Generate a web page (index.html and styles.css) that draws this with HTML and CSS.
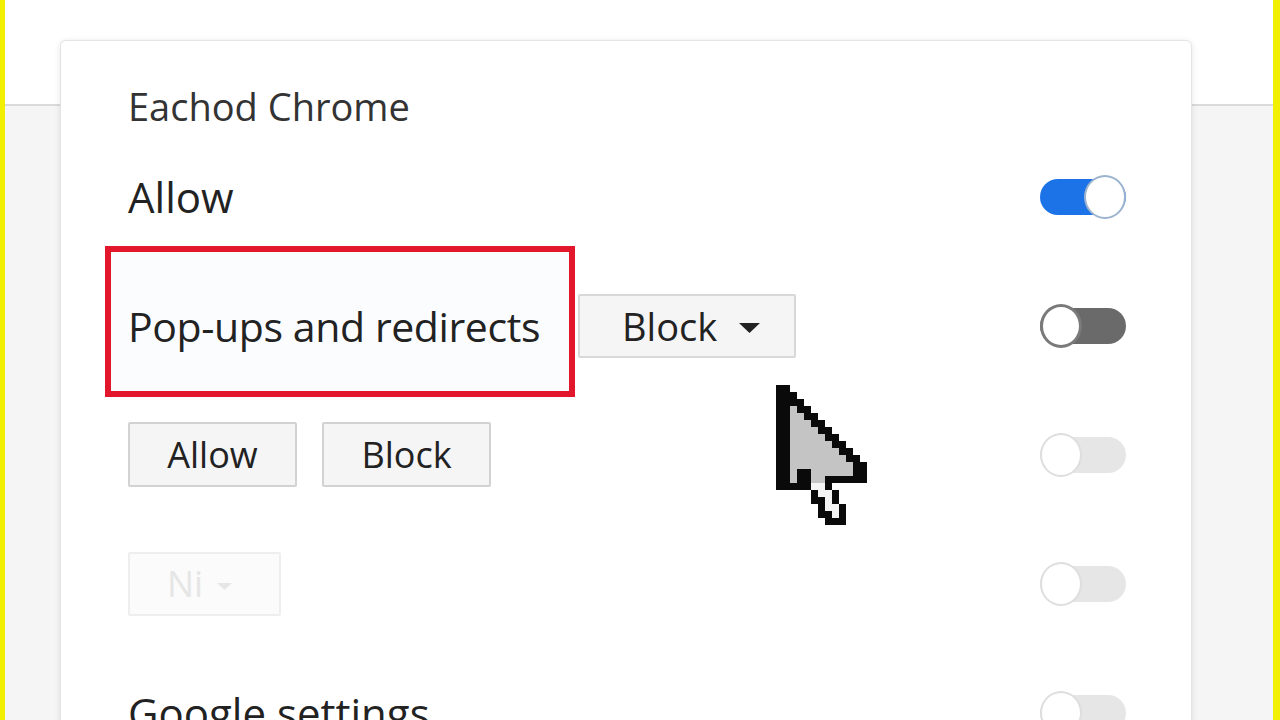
FILE: index.html
```html
<!DOCTYPE html>
<html>
<head>
<meta charset="utf-8">
<link rel="stylesheet" href="styles.css">
</head>
<body>
<div class="page">
  <div class="card">
    <div class="header">Eachod Chrome</div>

    <div class="row">
      <span class="label">Allow</span>
      <span class="toggle on"><span class="knob"></span></span>
    </div>

    <div class="row">
      <div class="left">
        <span class="label hl">Pop-ups and redirects</span>
        <span class="select">Block
          <svg class="caret" viewBox="0 0 21 10" width="21" height="10"><path d="M0 0H21L10.5 10Z" fill="#222"/></svg>
        </span>
      </div>
      <span class="toggle dark"><span class="knob"></span></span>
    </div>

    <div class="row">
      <div class="left btns">
        <span class="btn">Allow</span>
        <span class="btn">Block</span>
      </div>
      <span class="toggle light"><span class="knob"></span></span>
    </div>

    <div class="row">
      <span class="btn disabled">Ni
        <svg class="caret small" viewBox="0 0 15 7" width="15" height="7"><path d="M0 0H15L7.5 7Z" fill="#e6e6e6"/></svg>
      </span>
      <span class="toggle light"><span class="knob"></span></span>
    </div>

    <div class="row">
      <span class="label">Google settings</span>
      <span class="toggle light"><span class="knob"></span></span>
    </div>
  </div>

  <svg class="cursor" viewBox="0 0 13 20" width="91" height="140" shape-rendering="crispEdges">
    <path fill="#c4c4c4" d="M2 3h1v1h-1zM2 4h2v1h-2zM2 5h3v1h-3zM2 6h4v1h-4zM2 7h5v1h-5zM2 8h6v1h-6zM2 9h7v1h-7zM2 10h8v1h-8zM2 11h9v1h-9zM2 12h1v1h-1zM5 12h6v1h-6zM2 13h1v1h-1zM5 13h2v1h-2z"/>
    <path fill="#f4f4f4" d="M5 14h2v1h-2zM6 15h2v1h-2zM7 16h1v1h-1zM7 17h2v1h-2zM8 18h1v1h-1z"/>
    <path fill="#0a0a0a" d="M0 0h2v15h-2zM2 1h1v1h-1zM2 2h2v1h-2zM3 3h2v1h-2zM4 4h2v1h-2zM5 5h2v1h-2zM6 6h2v1h-2zM7 7h2v1h-2zM8 8h2v1h-2zM9 9h2v1h-2zM10 10h2v1h-2zM11 11h2v1h-2zM3 12h2v1h-2zM11 12h2v1h-2zM3 13h2v1h-2zM7 13h6v1h-6zM2 14h3v1h-3zM7 14h1v1h-1zM5 15h1v1h-1zM8 15h1v1h-1zM5 16h2v1h-2zM8 16h1v1h-1zM6 17h1v1h-1zM9 17h1v1h-1zM6 18h2v1h-2zM9 18h1v1h-1zM7 19h3v1h-3z"/>
  </svg>
</div>
</body>
</html>
```

FILE: styles.css
```css
html, body {
  margin: 0;
  padding: 0;
}

body {
  width: 1280px;
  height: 720px;
  overflow: hidden;
  font-family: "Open Sans", "Noto Sans", sans-serif;
  color: #242424;
}

.page {
  position: relative;
  box-sizing: border-box;
  height: 720px;
  overflow: hidden;
  border-left: 5px solid #f0f000;
  border-right: 7px solid #f0f000;
  padding-top: 40px;
  background: linear-gradient(#ffffff 0 104px, #dadada 104px 106px, #f5f5f5 106px);
}

.card {
  position: relative;
  z-index: 0;
  box-sizing: border-box;
  margin-left: 55px;
  width: 1132px;
  height: 780px;
  padding: 0 65px 0 67px;
  background: #ffffff;
  border: 1px solid #e4e4e4;
  border-radius: 6px;
  box-shadow: 0 1px 6px rgba(0, 0, 0, 0.10);
}

.header {
  box-sizing: border-box;
  height: 91px;
  padding-top: 46px;
  font-size: 38px;
  line-height: 38px;
  color: #333333;
}

.row {
  height: 129px;
  display: flex;
  align-items: center;
  justify-content: space-between;
}

.left {
  display: flex;
  align-items: center;
}

.label {
  font-size: 42px;
  line-height: 50px;
  color: #222222;
}

.hl {
  position: relative;
  width: 450px;
  flex: none;
  font-size: 41px;
  letter-spacing: -0.4px;
}

.hl::before {
  content: "";
  position: absolute;
  z-index: -1;
  left: -23px;
  right: 3px;
  top: -55px;
  height: 151px;
  box-sizing: border-box;
  border: 6px solid #e2172b;
  background: #fbfcfe;
}

.select {
  box-sizing: border-box;
  width: 218px;
  height: 64px;
  display: flex;
  align-items: center;
  padding-left: 42px;
  font-size: 38px;
  color: #222222;
  background: #f5f5f5;
  border: 2px solid #d8d8d8;
  border-radius: 2px;
}

.caret {
  margin-left: 22px;
  margin-top: 4px;
}

.btns {
  gap: 25px;
}

.btn {
  box-sizing: border-box;
  width: 169px;
  height: 65px;
  display: flex;
  align-items: center;
  justify-content: center;
  font-size: 36px;
  color: #222222;
  background: #f5f5f5;
  border: 2px solid #d2d2d2;
  border-radius: 2px;
}

.btn.disabled {
  width: 153px;
  height: 64px;
  justify-content: flex-start;
  padding-left: 37px;
  color: #e6e6e6;
  background: #fbfbfb;
  border-color: #eeeeee;
}

.caret.small {
  margin-left: 14px;
  margin-top: 6px;
}

.toggle {
  position: relative;
  flex: none;
  width: 86px;
  height: 36px;
  border-radius: 18px;
}

.knob {
  position: absolute;
  top: -4px;
  width: 42px;
  height: 44px;
  box-sizing: border-box;
  border-radius: 50%;
  background: #ffffff;
}

.toggle.on {
  background: #1c73e8;
}

.toggle.on .knob {
  right: 0;
  border: 2px solid #9bb3cf;
}

.toggle.dark {
  background: #6a6a6a;
}

.toggle.dark .knob {
  left: 0;
  border: 3px solid #7a7a7a;
}

.toggle.light {
  background: #e6e6e6;
}

.toggle.light .knob {
  left: 0;
  border: 2px solid #dedede;
}

.cursor {
  position: absolute;
  left: 771px;
  top: 385px;
}
```
